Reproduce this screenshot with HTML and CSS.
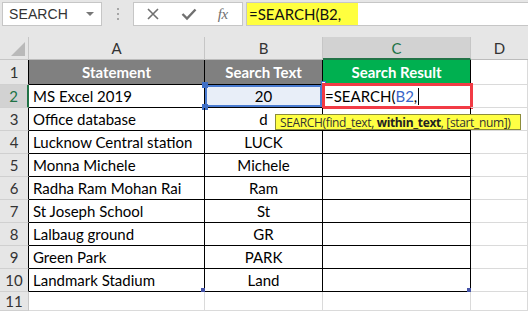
FILE: index.html
```html
<!DOCTYPE html>
<html>
<head>
<meta charset="utf-8">
<link rel="stylesheet" href="styles.css">
</head>
<body>
<div class="app">
  <div class="toolbar">
    <div class="namebox"><span class="nb-text">SEARCH</span><span class="caret"></span></div>
    <div class="grip">
      <svg width="4" height="14" viewBox="0 0 4 14"><rect x="1" y="1" width="2" height="2" fill="#a6a6a6"/><rect x="1" y="6" width="2" height="2" fill="#a6a6a6"/><rect x="1" y="11" width="2" height="2" fill="#a6a6a6"/></svg>
    </div>
    <div class="fbuttons">
      <svg class="ic" width="14" height="14" viewBox="0 0 14 14"><path d="M2 2 L12 12 M12 2 L2 12" stroke="#707070" stroke-width="1.6" fill="none"/></svg>
      <svg class="ic" width="16" height="14" viewBox="0 0 16 14"><path d="M1.5 7 L6 11.5 L14.5 2.5" stroke="#707070" stroke-width="2.4" fill="none"/></svg>
      <span class="fx">fx</span>
    </div>
    <div class="finput"><span class="hl">=SEARCH(B2,</span></div>
  </div>

  <div class="sheet">
    <div class="corner"><span class="tri"></span></div>
    <div class="colh">A</div>
    <div class="colh">B</div>
    <div class="colh colh-act">C</div>
    <div class="colh colh-last">D</div>

    <div class="rowh rowh-t">1</div>
    <div class="cell th">Statement</div>
    <div class="cell th">Search Text</div>
    <div class="cell th th-green">Search Result</div>
    <div class="cell empty"></div>

    <div class="rowh rowh-t rowh-act">2</div>
    <div class="cell">MS Excel 2019</div>
    <div class="cell ctr sel">20<span class="h h-tl"></span><span class="h h-bl"></span><span class="h h-tr"></span></div>
    <div class="cell edit"><span>=SEARCH(</span><span class="ref">B2</span><span>,</span><span class="cursor"></span>
      <div class="redbox"></div>
      <div class="tip"><span>SEARCH(find_text, <b>within_text</b>, [start_num])</span></div>
    </div>
    <div class="cell empty"></div>

    <div class="rowh rowh-t">3</div>
    <div class="cell">Office database</div>
    <div class="cell ctr">d</div>
    <div class="cell"></div>
    <div class="cell empty"></div>

    <div class="rowh rowh-t">4</div>
    <div class="cell">Lucknow Central station</div>
    <div class="cell ctr">LUCK</div>
    <div class="cell"></div>
    <div class="cell empty"></div>

    <div class="rowh rowh-t">5</div>
    <div class="cell">Monna Michele</div>
    <div class="cell ctr">Michele</div>
    <div class="cell"></div>
    <div class="cell empty"></div>

    <div class="rowh rowh-t">6</div>
    <div class="cell">Radha Ram Mohan Rai</div>
    <div class="cell ctr">Ram</div>
    <div class="cell"></div>
    <div class="cell empty"></div>

    <div class="rowh rowh-t">7</div>
    <div class="cell">St Joseph School</div>
    <div class="cell ctr">St</div>
    <div class="cell"></div>
    <div class="cell empty"></div>

    <div class="rowh rowh-t">8</div>
    <div class="cell">Lalbaug ground</div>
    <div class="cell ctr">GR</div>
    <div class="cell"></div>
    <div class="cell empty"></div>

    <div class="rowh rowh-t">9</div>
    <div class="cell">Green Park</div>
    <div class="cell ctr">PARK</div>
    <div class="cell"></div>
    <div class="cell empty"></div>

    <div class="rowh rowh-t">10</div>
    <div class="cell">Landmark Stadium<span class="mark"></span></div>
    <div class="cell ctr">Land</div>
    <div class="cell"><span class="mark"></span></div>
    <div class="cell empty"></div>

    <div class="rowh">11</div>
    <div class="cell empty"></div>
    <div class="cell empty"></div>
    <div class="cell empty"></div>
    <div class="cell empty"></div>
  </div>
</div>
</body>
</html>
```

FILE: styles.css
```css
* { box-sizing: border-box; }
html, body { margin: 0; padding: 0; }
body {
  width: 528px;
  height: 311px;
  overflow: hidden;
  background: #ffffff;
  font-family: Lato, "Liberation Sans", sans-serif;
}
.app {
  display: flex;
  flex-direction: column;
  height: 311px;
}
.toolbar {
  height: 37px;
  background: #e6e6e6;
  display: flex;
  align-items: flex-start;
  padding-top: 2px;
  padding-left: 2px;
}
.namebox {
  width: 100px;
  height: 24px;
  background: #fff;
  border: 1px solid #c6c6c6;
  display: flex;
  align-items: center;
  justify-content: space-between;
  padding: 0 7px 0 6px;
}
.nb-text {
  font-size: 14px;
  color: #333;
  font-family: "Liberation Sans", Arial, sans-serif;
  letter-spacing: 0.1px;
}
.caret {
  width: 0; height: 0;
  border-left: 4px solid transparent;
  border-right: 4px solid transparent;
  border-top: 4px solid #777;
}
.grip {
  width: 31px;
  height: 24px;
  display: flex;
  align-items: center;
  justify-content: center;
}
.fbuttons {
  width: 110px;
  height: 24px;
  background: #fff;
  border: 1px solid #c6c6c6;
  display: flex;
  align-items: center;
  justify-content: space-around;
  padding: 0 4px 0 2px;
}
.fx {
  font-family: "Liberation Serif", serif;
  font-style: italic;
  font-size: 15px;
  color: #707070;
  letter-spacing: -0.5px;
}
.finput {
  flex: 1;
  height: 24px;
  margin-left: 3px;
  background: #fff;
  border: 1px solid #c6c6c6;
  border-right: none;
  display: flex;
  align-items: stretch;
}
.hl {
  background: #ffff3f;
  width: 111px;
  font-size: 15px;
  color: #111;
  padding-left: 2px;
  display: flex;
  align-items: center;
}

.sheet {
  flex: 1;
  display: grid;
  grid-template-columns: 29px 176px 118px 148px 1fr;
  grid-template-rows: 23px 25px repeat(9, 23px) 1fr;
  font-size: 15px;
}
.corner {
  background: #e6e6e6;
  border-right: 1px solid #c6c6c6;
  border-bottom: 1px solid #c6c6c6;
  position: relative;
}
.tri {
  position: absolute;
  right: 3px;
  bottom: 3px;
  width: 0; height: 0;
  border-left: 14px solid transparent;
  border-bottom: 14px solid #b9b9b9;
}
.colh {
  background: #e6e6e6;
  border-right: 1px solid #c6c6c6;
  border-bottom: 1px solid #bcbcbc;
  color: #333;
  display: flex;
  align-items: center;
  justify-content: center;
  font-size: 15px;
}
.colh-act {
  background: #d2d2d2;
  color: #217346;
  border-bottom: 2px solid #217346;
}
.colh-last { border-right: none; }
.rowh {
  background: #e6e6e6;
  border-right: 1px solid #c6c6c6;
  border-bottom: 1px solid #d0d0d0;
  color: #333;
  display: flex;
  align-items: center;
  justify-content: center;
  font-size: 15px;
}
.rowh-t { border-right: 1px solid #000; }
.rowh-act {
  background: #d2d2d2;
  color: #217346;
  border-right: 2px solid #217346;
}
.cell {
  position: relative;
  border-right: 1px solid #000;
  border-bottom: 1px solid #000;
  display: flex;
  align-items: center;
  padding-left: 4px;
  color: #000;
  white-space: nowrap;
}
.ctr { justify-content: center; padding-left: 0; }
.th {
  background: #808080;
  color: #fff;
  font-weight: bold;
  justify-content: center;
  padding-left: 0;
}
.th-green { background: #00b050; }
.empty { border-right: 1px solid #dadada; border-bottom: 1px solid #dadada; }
.sel {
  background: #e8eef8;
  box-shadow: inset 0 0 0 2px #4a7bd0;
}
.h {
  position: absolute;
  width: 6px;
  height: 6px;
  background: #3f6fc6;
  border: 1px solid #3f6fc6;
}
.h-tl { left: -3px; top: -3px; }
.h-bl { left: -3px; bottom: -3px; }
.h-tr { right: -4px; top: -4px; background: #fff; width: 5px; height: 5px; }
.edit { padding-left: 2px; color: #000; }
.ref { color: #3a66c8; }
.cursor {
  display: inline-block;
  width: 1px;
  height: 17px;
  background: #000;
  margin-left: 1px;
}
.redbox {
  position: absolute;
  left: -1px;
  top: -2px;
  width: 151px;
  height: 26px;
  border: 3px solid #f23b45;
}
.tip {
  position: absolute;
  left: -48px;
  top: 29px;
  width: 246px;
  height: 16px;
  background: #ffff44;
  border: 1px solid #8c8c3a;
  font-size: 12px;
  color: #333;
  display: flex;
  align-items: center;
  padding-left: 4px;
  z-index: 5;
  font-family: "Open Sans", "Liberation Sans", Arial, sans-serif;
  letter-spacing: -0.35px;
}
.tip b { color: #222; }
.mark {
  position: absolute;
  right: -1px;
  bottom: -1px;
  width: 4px;
  height: 4px;
  background: #4654a8;
}
```
